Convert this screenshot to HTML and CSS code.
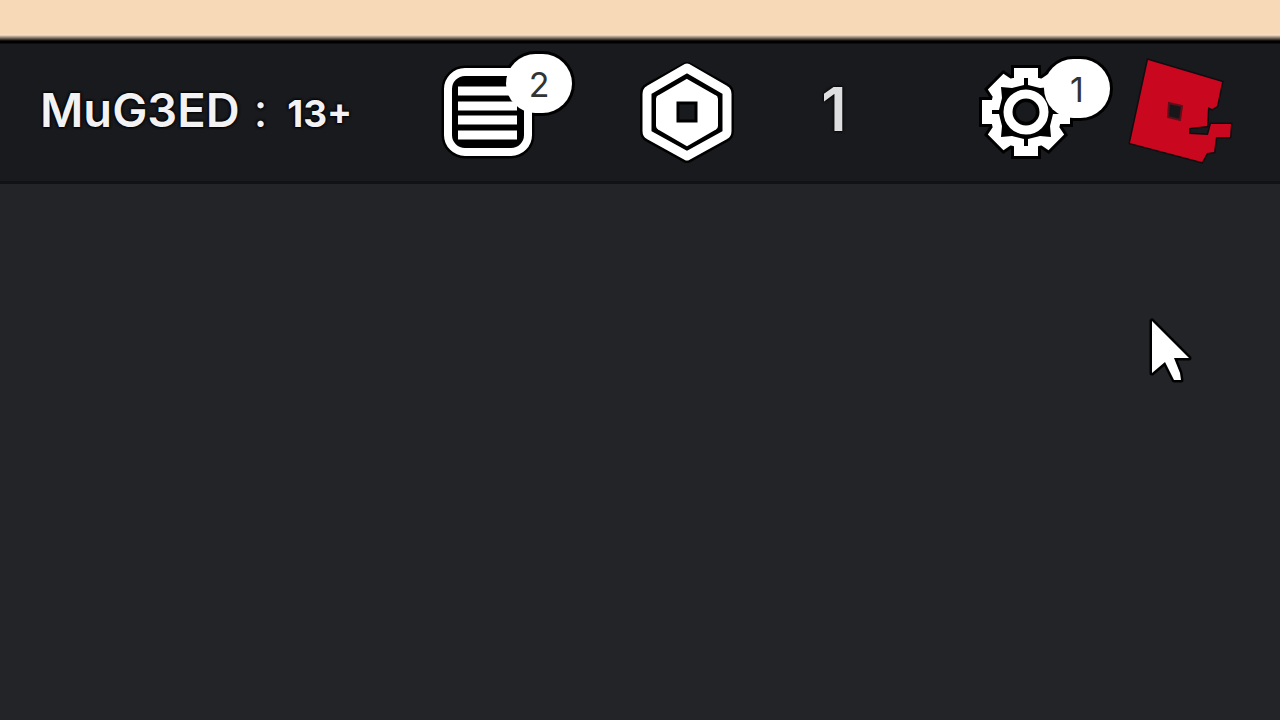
FILE: index.html
```html
<!DOCTYPE html>
<html lang="en">
<head>
<meta charset="utf-8">
<title>Home</title>
<meta name="viewport" content="width=device-width, initial-scale=1">
<link rel="stylesheet" href="styles.css">
</head>
<body>
<div class="browser-strip"></div>
<header class="navbar">
  <div class="account">
    <a class="username" href="#">MuG3ED</a>
    <span class="separator">:</span>
    <span class="age">13+</span>
  </div>
  <button class="icon-button feed" type="button" aria-label="Feed">
    <svg class="icon" viewBox="0 0 96 96" aria-hidden="true">
      <rect x="8" y="8" width="80" height="80" rx="17" fill="#000" stroke="#000" stroke-width="13"/>
      <rect x="8" y="8" width="80" height="80" rx="17" fill="#000" stroke="#fff" stroke-width="8"/>
      <path d="M18 27H77M18 42H77M18 56H77M18 71H77" stroke="#fff" stroke-width="9"/>
    </svg>
    <span class="badge badge-feed">2</span>
  </button>
  <button class="icon-button robux" type="button" aria-label="Robux">
    <svg class="icon" viewBox="0 0 96 96" aria-hidden="true">
      <path d="M48 5L86 26Q88 27 88 30V67Q88 70 86 71L48 92L10 71Q8 70 8 67V30Q8 27 10 26Z" fill="#000" stroke="#000" stroke-width="14" stroke-linejoin="round"/>
      <path d="M48 4L86 26Q88 27 88 30V67Q88 70 86 71L48 92L10 71Q8 70 8 67V30Q8 27 10 26Z" fill="#000" stroke="#fff" stroke-width="9" stroke-linejoin="round"/>
      <path d="M48 16L76 32Q78 33 78 35V62Q78 64 76 65L48 81L20 65Q18 64 18 62V35Q18 33 20 32Z" fill="#fff" stroke="#fff" stroke-width="2"/>
      <path d="M39 39H57V57H39Z" fill="#191a1e" stroke="#000" stroke-width="3"/>
    </svg>
  </button>
  <span class="balance">1</span>
  <button class="icon-button settings" type="button" aria-label="Settings">
    <svg class="icon" viewBox="-48 -48 96 96" aria-hidden="true">
      <path d="M-8-40H8V-31L16-29L22-33L33-22L29-16L31-8H40V8H31L29 16L33 22L22 33L16 29L8 31V40H-8V31L-16 29L-22 33L-33 22L-29 16L-31 8H-40V-8H-31L-29-16L-33-22L-22-33L-16-29L-8-31Z" fill="#000" stroke="#000" stroke-width="14"/>
      <path d="M-8-40H8V-31L16-29L22-33L33-22L29-16L31-8H40V8H31L29 16L33 22L22 33L16 29L8 31V40H-8V31L-16 29L-22 33L-33 22L-29 16L-31 8H-40V-8H-31L-29-16L-33-22L-22-33L-16-29L-8-31Z" fill="#fff" stroke="#fff" stroke-width="8"/>
      <path d="M-2-34H2V-27L14-24L25-25L24-14L27-2H34V2H27L24 14L25 25L14 24L2 27V34H-2V27L-14 24L-25 25L-24 14L-27 2H-34V-2H-27L-24-14L-25-25L-14-24L-2-27Z" fill="#000"/>
      <circle r="18" fill="#000" stroke="#fff" stroke-width="9"/>
      <circle r="10" fill="#191a1e"/>
    </svg>
    <span class="badge badge-settings">1</span>
  </button>
  <a class="brand" href="#" aria-label="Extension">
    <svg class="brand-logo" viewBox="0 0 108 108" aria-hidden="true">
      <path d="M20 2L94 24L89 48L84 51L80 49L79 68L61 70V76L80 77L83 66L103 66L102 79L88 79L86 94L79 95L74 104L2 85Z" fill="#c9081f" stroke="#120b0f" stroke-width="3" paint-order="stroke"/>
      <path d="M41 45L54 48L52 62L40 59Z" fill="#171719" stroke="#5d101b" stroke-width="2"/>
    </svg>
  </a>
</header>
<main class="content">
  <svg class="cursor" viewBox="0 0 50 70" aria-hidden="true">
    <path d="M7 7V59L20 48L29 66H36L35 59L29 44H44Z" fill="#fff" stroke="#000" stroke-width="5" stroke-linejoin="round" paint-order="stroke"/>
  </svg>
</main>
</body>
</html>
```
FILE: styles.css
```css
* {
  box-sizing: border-box;
}

body {
  margin: 0;
  min-height: 100vh;
  display: flex;
  flex-direction: column;
  background: #232428;
  color: #f2f2f4;
  font-family: Inter, "Liberation Sans", sans-serif;
}

a {
  color: inherit;
  text-decoration: none;
}

.browser-strip {
  height: 44px;
  background: linear-gradient(#f7d9b8 33px, #f7dfc5 35px, #000 41px, #000 43px, #191a1e 44px);
}

.navbar {
  display: flex;
  align-items: center;
  height: 140px;
  padding: 0 44px 2px 40px;
  background: #191a1e;
  border-bottom: 3px solid #111216;
}

.account {
  flex: 1;
  display: flex;
  align-items: baseline;
  text-shadow: 0 0 3px #000, 0 0 3px #000, 0 0 3px #000;
}

.username {
  font-size: 47px;
  font-weight: 600;
  line-height: 60px;
}

.separator {
  margin: 0 20px 0 14px;
  font-size: 47px;
  line-height: 60px;
}

.age {
  padding-top: 4px;
  align-self: center;
  font-size: 37px;
  font-weight: 700;
  line-height: 60px;
}

.icon-button {
  position: relative;
  isolation: isolate;
  width: 96px;
  height: 96px;
  padding: 0;
  border: 0;
  background: none;
  font: inherit;
}

.icon,
.brand-logo,
.cursor {
  display: block;
  width: 100%;
  overflow: visible;
}

.robux {
  margin-left: 103px;
}

.balance {
  width: 30px;
  margin: 0 129px 0 84px;
  padding-bottom: 6px;
  font-size: 60px;
  font-weight: 600;
  line-height: 90px;
  text-align: center;
  color: #dedee0;
  text-shadow: 0 0 3px #000, 0 0 3px #000;
}

.badge {
  position: absolute;
  width: 66px;
  height: 59px;
  border-radius: 30px;
  background: #fff;
  color: #333;
  font-size: 34px;
  line-height: 62px;
  text-align: center;
}

.badge::before {
  content: "";
  position: absolute;
  z-index: -1;
  inset: -3px;
  border-radius: 33px;
  background: #000;
}

.badge-feed {
  top: -10px;
  left: 66px;
}

.badge-settings {
  top: -5px;
  left: 66px;
}

.brand {
  width: 108px;
  margin-left: 54px;
}

.content {
  position: relative;
  flex: 1;
}

.cursor {
  position: absolute;
  top: 130px;
  right: 85px;
  width: 50px;
}
```
